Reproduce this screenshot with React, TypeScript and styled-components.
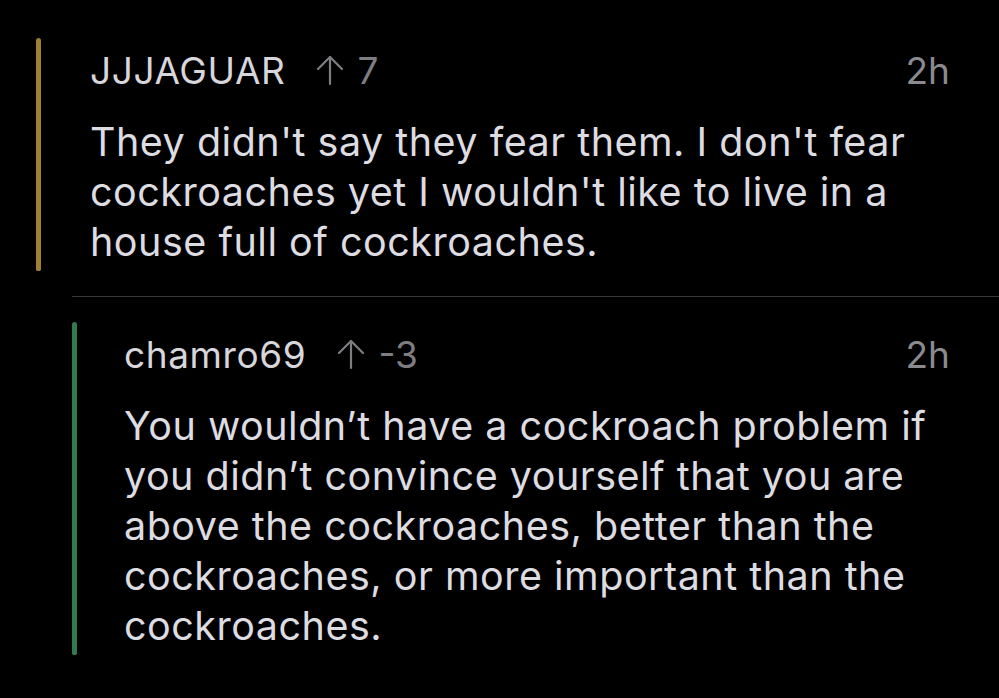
import React from "react";
import styled, { createGlobalStyle } from "styled-components";

const Global = createGlobalStyle`
  html, body { margin: 0; padding: 0; background: #000; }
  body { font-family: Inter, "Noto Sans", "Liberation Sans", sans-serif; -webkit-font-smoothing: antialiased; }
`;

const Page = styled.div`
  width: 999px;
  height: 698px;
  background: #000;
  overflow: hidden;
  padding-top: 38px;
  box-sizing: border-box;
`;

const CommentRow = styled.div<{ $indent: number }>`
  display: flex;
  margin-left: ${(p) => p.$indent}px;
`;

const Bar = styled.div<{ $color: string }>`
  width: 5px;
  flex: none;
  background: ${(p) => p.$color};
  border-radius: 3px 3px 2px 2px;
`;

const Content = styled.div<{ $pad: number }>`
  flex: 1;
  padding-left: ${(p) => p.$pad}px;
  padding-right: 49px;
  padding-bottom: 4px;
`;

const Header = styled.div`
  display: flex;
  align-items: center;
  height: 64px;
`;

const Author = styled.span`
  font-size: 37px;
  color: #d6d6db;
  letter-spacing: 0.6px;
`;

const Score = styled.span`
  display: flex;
  align-items: center;
  margin-left: 30px;
  font-size: 37px;
  color: #7d7d82;
  gap: 12px;
`;

const Time = styled.span`
  margin-left: auto;
  font-size: 37px;
  color: #8a8a8f;
`;

const Body = styled.div`
  margin-top: 15px;
  font-size: 39.5px;
  letter-spacing: 0.5px;
  line-height: 50px;
  color: #dcdce1;
  white-space: nowrap;
`;

const Reply = styled.div`
  margin-left: 72px;
  margin-top: 25px;
  border-top: 1px solid #3a3a3c;
  padding-top: 25px;
`;

const UpArrow = () => (
  <svg width="30" height="32" viewBox="0 0 30 32" fill="none" stroke="#7d7d82" strokeWidth="2.2" strokeLinecap="round" strokeLinejoin="round">
    <path d="M15 30V3" />
    <path d="M3 15L15 3l12 12" />
  </svg>
);

type C = { author: string; score: string; time: string; lines: string[]; color: string };

const Comment = ({ c, indent, pad }: { c: C; indent: number; pad: number }) => (
  <CommentRow $indent={indent}>
    <Bar $color={c.color} />
    <Content $pad={pad}>
      <Header>
        <Author>{c.author}</Author>
        <Score>
          <UpArrow />
          {c.score}
        </Score>
        <Time>{c.time}</Time>
      </Header>
      <Body>
        {c.lines.map((l, i) => (
          <div key={i}>{l}</div>
        ))}
      </Body>
    </Content>
  </CommentRow>
);

const first: C = {
  author: "JJJAGUAR",
  score: "7",
  time: "2h",
  color: "#a07f34",
  lines: [
    "They didn't say they fear them. I don't fear",
    "cockroaches yet I wouldn't like to live in a",
    "house full of cockroaches.",
  ],
};

const second: C = {
  author: "chamro69",
  score: "-3",
  time: "2h",
  color: "#2f7a52",
  lines: [
    "You wouldn’t have a cockroach problem if",
    "you didn’t convince yourself that you are",
    "above the cockroaches, better than the",
    "cockroaches, or more important than the",
    "cockroaches.",
  ],
};

export default function App() {
  return (
    <Page>
      <Global />
      <Comment c={first} indent={36} pad={49} />
      <Reply>
        <Comment c={second} indent={0} pad={47} />
      </Reply>
    </Page>
  );
}
